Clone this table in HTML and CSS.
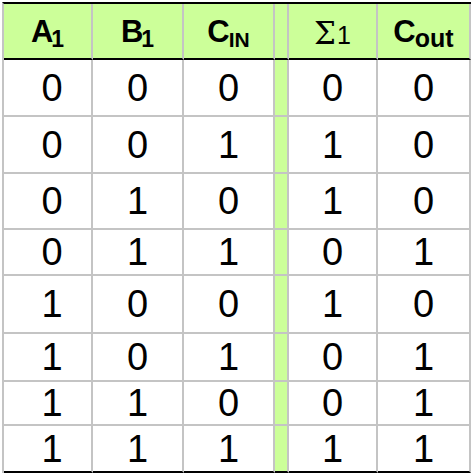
FILE: index.html
```html
<!DOCTYPE html>
<html>
<head>
<meta charset="utf-8">
<link rel="stylesheet" href="styles.css">
</head>
<body>
<div class="truth">
  <div class="cell head"><span class="big">A</span><span class="sub">1</span></div>
  <div class="cell head"><span class="big">B</span><span class="sub">1</span></div>
  <div class="cell head"><span class="big">C</span><span class="sub cap">IN</span></div>
  <div class="cell head gap"></div>
  <div class="cell head"><span class="sigma">Σ</span><span class="sub thin">1</span></div>
  <div class="cell head"><span class="big">C</span><span class="sub out">out</span></div>

  <div class="cell">0</div><div class="cell">0</div><div class="cell">0</div><div class="cell gap"></div><div class="cell">0</div><div class="cell">0</div>
  <div class="cell">0</div><div class="cell">0</div><div class="cell">1</div><div class="cell gap"></div><div class="cell">1</div><div class="cell">0</div>
  <div class="cell">0</div><div class="cell">1</div><div class="cell">0</div><div class="cell gap"></div><div class="cell">1</div><div class="cell">0</div>
  <div class="cell">0</div><div class="cell">1</div><div class="cell">1</div><div class="cell gap"></div><div class="cell">0</div><div class="cell">1</div>
  <div class="cell">1</div><div class="cell">0</div><div class="cell">0</div><div class="cell gap"></div><div class="cell">1</div><div class="cell">0</div>
  <div class="cell">1</div><div class="cell">0</div><div class="cell">1</div><div class="cell gap"></div><div class="cell">0</div><div class="cell">1</div>
  <div class="cell">1</div><div class="cell">1</div><div class="cell">0</div><div class="cell gap"></div><div class="cell">0</div><div class="cell">1</div>
  <div class="cell last">1</div><div class="cell last">1</div><div class="cell last">1</div><div class="cell gap last"></div><div class="cell last">1</div><div class="cell last">1</div>
</div>
</body>
</html>
```

FILE: styles.css
```css
html, body {
  margin: 0;
  padding: 0;
  background: #ffffff;
}

.truth {
  display: grid;
  grid-template-columns: 89px 91px 91px 14px 89px 93px;
  grid-template-rows: 56px 57px 57px 56px 46px 58px 48px 44px 47px;
  width: max-content;
  margin: 2px 0 0 2px;
  border-left: 2px solid #c4c4c4;
  border-top: 2px solid #000000;
  font-family: "Liberation Sans", Arial, sans-serif;
  color: #000000;
}

.cell {
  box-sizing: border-box;
  display: flex;
  align-items: center;
  justify-content: center;
  border-right: 2px solid #c4c4c4;
  border-bottom: 2px solid #c4c4c4;
  font-size: 38px;
  line-height: 1;
}

.truth > .cell:nth-child(6n+1) {
  padding-left: 9px;
}

.truth > .cell.head:nth-child(6n+1) {
  padding-left: 0;
}

.head {
  background: #ccff99;
  border-bottom-color: #000000;
  align-items: baseline;
  padding-top: 12px;
  font-weight: bold;
}

.gap {
  background: #ccff99;
}

.last {
  border-bottom-color: #000000;
}

.big {
  font-size: 31px;
  font-weight: bold;
  letter-spacing: -1px;
}

.sub {
  font-size: 23px;
  font-weight: bold;
  position: relative;
  top: 5px;
  margin-left: -1px;
}

.sub.cap {
  font-size: 21px;
  margin-left: 0;
}

.sub.out {
  font-size: 25px;
  margin-left: 0;
}

.sigma {
  font-family: "DejaVu Serif", "Liberation Serif", serif;
  font-size: 31px;
  font-weight: normal;
  position: relative;
  top: 2px;
}

.sub.thin {
  font-weight: normal;
  font-size: 25px;
  margin-left: 1px;
  top: 2px;
}
```
